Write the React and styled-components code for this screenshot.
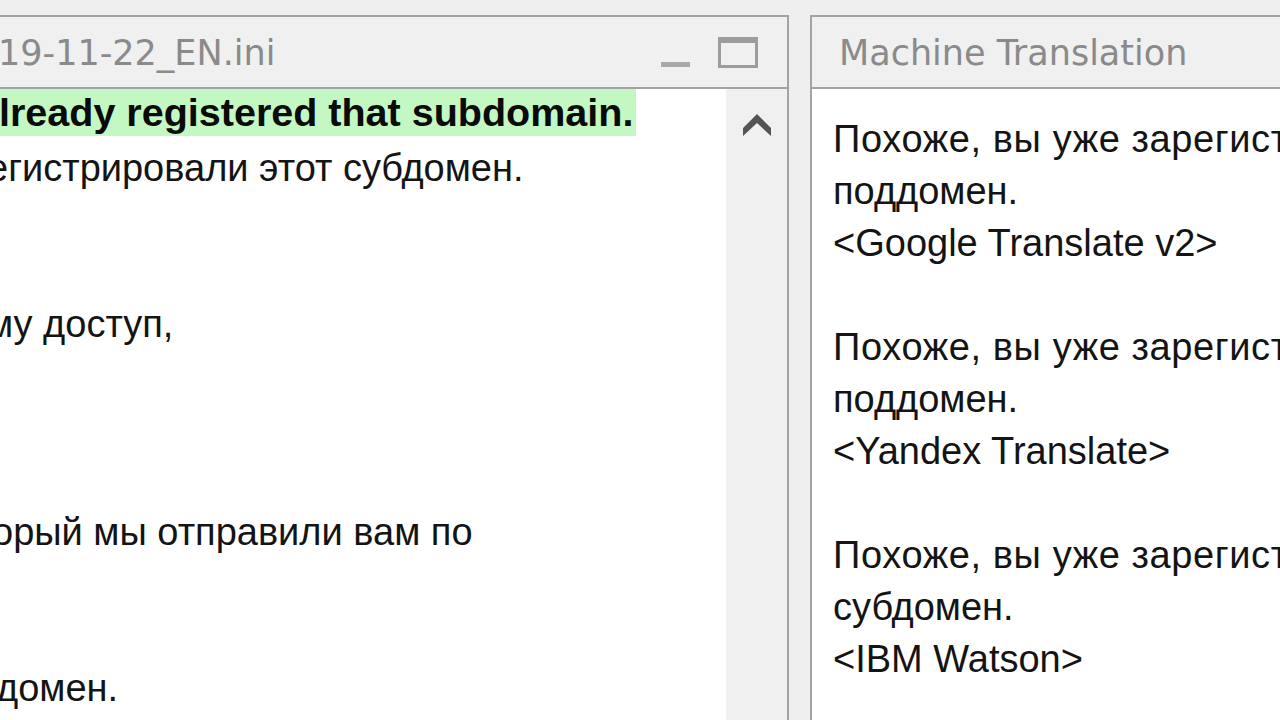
import React from "react";
import styled, { createGlobalStyle } from "styled-components";

const Global = createGlobalStyle`
  html, body { margin: 0; padding: 0; }
  body {
    background: #efefef;
    overflow: hidden;
    width: 1280px;
    height: 720px;
  }
`;

const Page = styled.div`
  display: flex;
  gap: 21px;
  padding-top: 15px;
  height: 720px;
  box-sizing: border-box;
  overflow: hidden;
`;

const Pane = styled.section`
  display: flex;
  flex-direction: column;
  box-sizing: border-box;
  border-top: 2px solid #a3a3a3;
  border-left: ${(p) => (p.$left ? "2px solid #a3a3a3" : "none")};
  border-right: ${(p) => (p.$right ? "2px solid #a3a3a3" : "none")};
  width: ${(p) => p.$width || "auto"};
  flex: ${(p) => (p.$grow ? "1" : "none")};
  min-width: 0;
  background: #f0f0f0;
`;

const Header = styled.header`
  display: flex;
  align-items: center;
  height: 70px;
  border-bottom: 2px solid #a3a3a3;
  padding: 0 29px 0 ${(p) => p.$pad || 0}px;
  background: #f0f0f0;
  flex: none;
`;

const Title = styled.h2`
  flex: 1;
  margin: 0;
  padding-top: 2px;
  font-family: "DejaVu Sans", Tahoma, sans-serif;
  font-weight: normal;
  font-size: 35px;
  color: #8a8a8a;
  white-space: nowrap;
  overflow: hidden;
  text-indent: ${(p) => p.$indent || 0}px;
`;

const Controls = styled.div`
  display: flex;
  align-items: flex-end;
  gap: 28px;
`;

const MinimizeBtn = styled.span`
  display: block;
  width: 29px;
  height: 5px;
  background: #a8a8a8;
  margin-bottom: 1px;
`;

const MaximizeBtn = styled.span`
  display: block;
  width: 40px;
  height: 31px;
  box-sizing: border-box;
  border: 3px solid #9c9c9c;
  border-top-width: 6px;
`;

const Body = styled.div`
  display: flex;
  flex: 1;
  min-height: 0;
`;

const Content = styled.div`
  flex: 1;
  min-width: 0;
  background: #fff;
  overflow: hidden;
  font-family: "Liberation Sans", Arial, sans-serif;
  font-size: 38px;
  color: #141414;
  padding: ${(p) => p.$pad || "0"};
`;

const ActiveSource = styled.div`
  display: inline-block;
  background: #c3f8c3;
  font-weight: bold;
  color: #0a0a0a;
  height: 47px;
  line-height: 47px;
  margin-bottom: 6px;
  white-space: nowrap;
  font-size: 39.5px;
  padding-right: 3px;
  text-indent: ${(p) => p.$indent || 0}px;
`;

const Line = styled.div`
  height: 52px;
  line-height: 52px;
  white-space: nowrap;
  letter-spacing: ${(p) => (p.$spread ? "0.6px" : "0")};
  text-indent: ${(p) => p.$indent || 0}px;
`;

const Scrollbar = styled.div`
  width: 61px;
  flex: none;
  background: #f0f0f0;
  display: flex;
  justify-content: center;
  padding-top: 25px;
  box-sizing: border-box;
`;

const ChevronUp = () => (
  <svg width="28" height="23" viewBox="0 0 28 23">
    <polygon points="0,14 14,0 28,14 28,22 14,9 0,22" fill="#545454" />
  </svg>
);

const leftLines = [
  { t: "егистрировали этот субдомен.", i: -13 },
  { t: "" },
  { t: "" },
  { t: "му доступ,", i: -13 },
  { t: "" },
  { t: "" },
  { t: "" },
  { t: "орый мы отправили вам по", i: -8 },
  { t: "" },
  { t: "" },
  { t: "домен.", i: -4 },
];

const mtLines = [
  { t: "Похоже, вы уже зарегистрировали этот", s: true },
  { t: "поддомен." },
  { t: "<Google Translate v2>" },
  { t: "" },
  { t: "Похоже, вы уже зарегистрировали этот", s: true },
  { t: "поддомен." },
  { t: "<Yandex Translate>" },
  { t: "" },
  { t: "Похоже, вы уже зарегистрировали этот", s: true },
  { t: "субдомен." },
  { t: "<IBM Watson>" },
];

export default function App() {
  return (
    <>
      <Global />
      <Page>
        <Pane $width="789px" $right>
          <Header>
            <Title $indent={-2}>19-11-22_EN.ini</Title>
            <Controls>
              <MinimizeBtn />
              <MaximizeBtn />
            </Controls>
          </Header>
          <Body>
            <Content>
              <ActiveSource $indent={-1}>lready registered that subdomain.</ActiveSource>
              {leftLines.map((l, k) => (
                <Line key={k} $indent={l.i}>
                  {l.t}
                </Line>
              ))}
            </Content>
            <Scrollbar>
              <ChevronUp />
            </Scrollbar>
          </Body>
        </Pane>
        <Pane $grow $left>
          <Header $pad={27}>
            <Title>Machine Translation</Title>
          </Header>
          <Body>
            <Content $pad="24px 0 0 21px">
              {mtLines.map((l, k) => (
                <Line key={k} $spread={l.s}>
                  {l.t}
                </Line>
              ))}
            </Content>
          </Body>
        </Pane>
      </Page>
    </>
  );
}
